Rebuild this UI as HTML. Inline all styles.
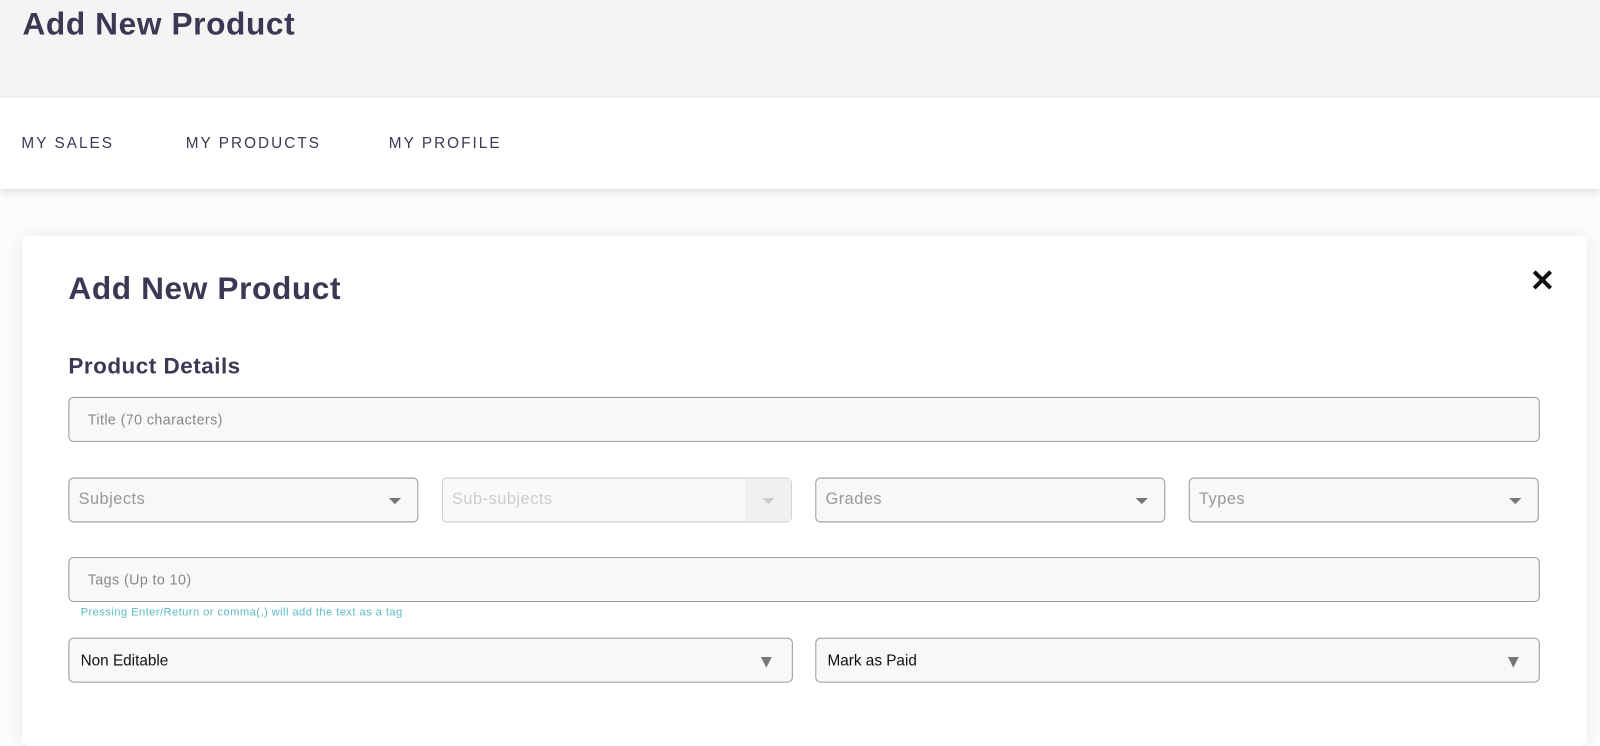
<!DOCTYPE html>
<html><head><style>
*{box-sizing:border-box;margin:0;padding:0}
body{width:1600px;height:711px;overflow:hidden;background:#fcfcfc;font-family:"Liberation Sans",sans-serif;color:#3a3852}
#w{position:absolute;left:0;top:0;width:1568px;height:700px;transform:scale(1.0204);transform-origin:0 0}
.top{position:absolute;left:0;top:0;width:1568px;height:96px;background:#f4f4f5}
.top h1{position:absolute;left:22px;top:6px;font-size:31px;font-weight:bold;color:#3a3852;letter-spacing:0.6px}
.nav{position:absolute;left:0;top:96px;width:1568px;height:89px;background:#fff;box-shadow:0 3px 8px rgba(0,0,0,.12)}
.nav span{position:absolute;top:36px;font-size:15px;letter-spacing:2px;color:#3a3852}
.card{position:absolute;left:22px;top:231px;width:1533px;height:500px;background:#fff;border-radius:6px;box-shadow:0 0 18px rgba(0,0,0,.08)}
.f{position:absolute;background:#f7f8fa;border:1px solid #999;border-radius:5px;height:44px;font-size:14px;color:#888;padding:13px 0 0 18px;letter-spacing:0.4px}
.sel{font-size:16px;padding:12px 0 0 9px;color:#999;letter-spacing:0.5px}
.car{position:absolute;right:16px;top:19px;width:0;height:0;border-left:6px solid transparent;border-right:6px solid transparent;border-top:6px solid #777}
.dis{border-color:#ccc;color:#ccc;background:#f9f9f9}
.dis .car{border-top-color:#ccc}
.dis .box{position:absolute;right:0;top:0;width:45px;height:42px;background:#f0f0f0}
.big{font-size:15px;color:#111;padding:13px 0 0 11px;letter-spacing:0}
.tri{position:absolute;right:16px;top:12px;font-size:18px;color:#777}
</style></head><body><div id="w">
<div class="top"><h1>Add New Product</h1></div>
<div class="nav"><span style="left:21px">MY SALES</span><span style="left:182px">MY PRODUCTS</span><span style="left:381px">MY PROFILE</span></div>
<div class="card"></div>
<div style="position:absolute;left:67px;top:265px;font-size:31px;font-weight:bold;letter-spacing:0.6px">Add New Product</div>
<div style="position:absolute;left:1499px;top:258px;font-size:30px;font-weight:bold;color:#111">✕</div>
<div style="position:absolute;left:67px;top:346px;font-size:22px;font-weight:bold;letter-spacing:0.5px">Product Details</div>
<div class="f" style="left:67px;top:389px;width:1442px">Title (70 characters)</div>
<div class="f sel" style="left:67px;top:468px;width:343px">Subjects<div class="car"></div></div>
<div class="f sel dis" style="left:433px;top:468px;width:343px">Sub-subjects<div class="box"></div><div class="car"></div></div>
<div class="f sel" style="left:799px;top:468px;width:343px">Grades<div class="car"></div></div>
<div class="f sel" style="left:1165px;top:468px;width:343px">Types<div class="car"></div></div>
<div class="f" style="left:67px;top:546px;width:1442px">Tags (Up to 10)</div>
<div style="position:absolute;left:79px;top:594px;font-size:11px;color:#5bbcc6;letter-spacing:0.4px">Pressing Enter/Return or comma(,) will add the text as a tag</div>
<div class="f big" style="left:67px;top:625px;width:710px">Non Editable<span class="tri">▼</span></div>
<div class="f big" style="left:799px;top:625px;width:710px">Mark as Paid<span class="tri">▼</span></div>
</div></body></html>
